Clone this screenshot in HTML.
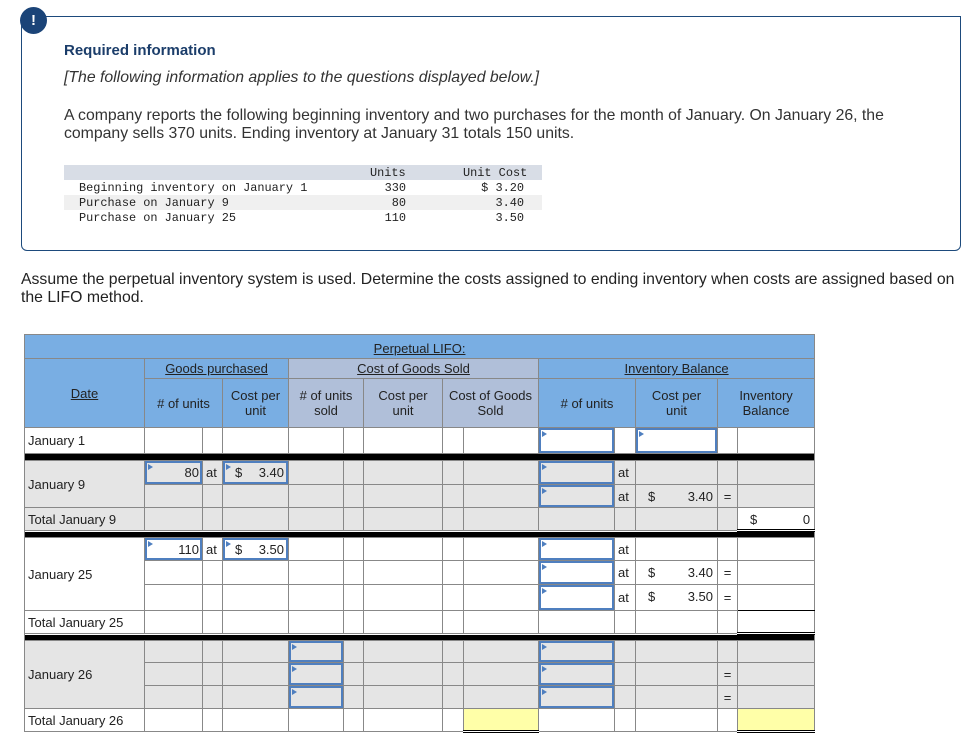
<!DOCTYPE html>
<html><head><meta charset="utf-8"><style>
*{box-sizing:border-box;margin:0;padding:0}
body{width:966px;height:754px;background:#fff;position:relative;font-family:"Liberation Sans",Arial,sans-serif;color:#222;overflow:hidden}
.box{position:absolute;left:21px;top:16px;width:940px;height:235px;border:1px solid #1d4a7c;border-radius:0 0 6px 6px}
.bang{position:absolute;left:20px;top:7px;width:27px;height:27px;border-radius:50%;background:#1b4478;color:#fff;font-weight:bold;font-size:15px;text-align:center;line-height:27px}
.t{position:absolute;white-space:nowrap}
.mono{font-family:"Liberation Mono","DejaVu Sans Mono",monospace;font-size:11.9px;color:#222}
table.g{position:absolute;left:24px;top:334px;border-collapse:collapse;table-layout:fixed;width:790px;font-size:13px}
table.g td{border:1px solid #888;padding:0 3px;overflow:hidden;white-space:nowrap;position:relative}
.hb{background:#79aee3}
.hc{background:#b0bfd9}
.gr td{background:#e5e5e5}
.sep td{background:#000;height:7px;border-color:#000;padding:0}
.u{text-decoration:underline}
.c{text-align:center}
.r{text-align:right}
.in{position:absolute;left:0;top:0;right:0;bottom:0;border:2px solid #4f7fbf}
.in:before{content:"";position:absolute;left:1px;top:1px;border-left:5px solid #4f7fbf;border-top:3px solid transparent;border-bottom:3px solid transparent}
.y{background:#ffffa8 !important}
.bb{border-bottom:3px double #000 !important}
.d{position:absolute;left:12px;top:4px}
.v{position:absolute;right:4px;top:4px}
</style></head><body>
<div class="box"></div>
<div class="bang">!</div>
<div class="t" style="left:64px;top:42px;font-size:15px;font-weight:bold;color:#1b3d6a">Required information</div>
<div class="t" style="left:64px;top:69px;font-size:15.8px;font-style:italic;color:#333">[The following information applies to the questions displayed below.]</div>
<div class="t" style="left:64px;top:107px;font-size:15.8px;line-height:18px;color:#333">A company reports the following beginning inventory and two purchases for the month of January. On January 26, the<br>company sells 370 units. Ending inventory at January 31 totals 150 units.</div>
<div style="position:absolute;left:64px;top:165px;width:478px;height:15px;background:#d8dde6"></div>
<div style="position:absolute;left:64px;top:195px;width:478px;height:15px;background:#f0f0f0"></div>
<div class="t mono" style="left:370px;top:166px">Units</div>
<div class="t mono" style="left:463px;top:166px">Unit Cost</div>
<div class="t mono" style="left:79px;top:181px">Beginning inventory on January 1</div>
<div class="t mono" style="left:79px;top:196px">Purchase on January 9</div>
<div class="t mono" style="left:79px;top:211px">Purchase on January 25</div>
<div class="t mono" style="left:370px;top:181px;width:36px;text-align:right">330</div>
<div class="t mono" style="left:370px;top:196px;width:36px;text-align:right">80</div>
<div class="t mono" style="left:370px;top:211px;width:36px;text-align:right">110</div>
<div class="t mono" style="left:460px;top:181px;width:64px;text-align:right">$ 3.20</div>
<div class="t mono" style="left:460px;top:196px;width:64px;text-align:right">3.40</div>
<div class="t mono" style="left:460px;top:211px;width:64px;text-align:right">3.50</div>
<div class="t" style="left:21px;top:271px;font-size:15.8px;line-height:18px;color:#222">Assume the perpetual inventory system is used. Determine the costs assigned to ending inventory when costs are assigned based on<br>the LIFO method.</div>

<table class="g">
<colgroup><col style="width:120px"><col style="width:58px"><col style="width:20px"><col style="width:66px"><col style="width:55px"><col style="width:20px"><col style="width:79px"><col style="width:21px"><col style="width:75px"><col style="width:76px"><col style="width:21px"><col style="width:82px"><col style="width:20px"><col style="width:77px"></colgroup>
<tr style="height:24px"><td colspan="14" class="hb c"><span class="u" style="position:relative;top:2px">Perpetual LIFO:</span></td></tr>
<tr style="height:20px"><td rowspan="2" class="hb c"><span class="u">Date</span></td><td colspan="3" class="hb c"><span class="u">Goods purchased</span></td><td colspan="5" class="hc c"><span class="u">Cost of Goods Sold</span></td><td colspan="5" class="hb c"><span class="u">Inventory Balance</span></td></tr>
<tr style="height:49px;line-height:15px"><td colspan="2" class="hb c"># of units</td><td class="hb c">Cost per<br>unit</td><td colspan="2" class="hc c"># of units<br>sold</td><td class="hc c">Cost per<br>unit</td><td colspan="2" class="hc c">Cost of Goods<br>Sold</td><td colspan="2" class="hb c"># of units</td><td class="hb c">Cost per<br>unit</td><td colspan="2" class="hb c">Inventory<br>Balance</td></tr>
<tr style="height:26px"><td>January 1</td><td></td><td></td><td></td><td></td><td></td><td></td><td></td><td></td><td><div class="in" style="background:#fff"></div></td><td></td><td><div class="in" style="background:#fff"></div></td><td></td><td></td></tr>
<tr class="sep"><td colspan="14"></td></tr>
<tr class="gr" style="height:24px"><td rowspan="2">January 9</td><td class="r"><div class="in"></div><span style="position:relative">80</span></td><td>at</td><td><div class="in"></div><span class="d">$</span><span class="v">3.40</span></td><td></td><td></td><td></td><td></td><td></td><td><div class="in"></div></td><td>at</td><td></td><td></td><td></td></tr>
<tr class="gr" style="height:23px"><td></td><td></td><td></td><td></td><td></td><td></td><td></td><td></td><td><div class="in"></div></td><td>at</td><td><span class="d">$</span><span class="v">3.40</span></td><td class="c">=</td><td></td></tr>
<tr class="gr" style="height:23px"><td>Total January 9</td><td></td><td></td><td></td><td></td><td></td><td></td><td></td><td></td><td></td><td></td><td></td><td></td><td class="bb" style="background:#fff"><span class="d">$</span><span class="v">0</span></td></tr>
<tr class="sep"><td colspan="14"></td></tr>
<tr style="height:23px"><td rowspan="3">January 25</td><td class="r"><div class="in"></div><span style="position:relative">110</span></td><td>at</td><td><div class="in"></div><span class="d">$</span><span class="v">3.50</span></td><td></td><td></td><td></td><td></td><td></td><td><div class="in"></div></td><td>at</td><td></td><td></td><td></td></tr>
<tr style="height:24px"><td></td><td></td><td></td><td></td><td></td><td></td><td></td><td></td><td><div class="in"></div></td><td>at</td><td><span class="d">$</span><span class="v">3.40</span></td><td class="c">=</td><td></td></tr>
<tr style="height:26px"><td></td><td></td><td></td><td></td><td></td><td></td><td></td><td></td><td><div class="in"></div></td><td>at</td><td><span class="d">$</span><span class="v">3.50</span></td><td class="c">=</td><td style="border-bottom:1px solid #000"></td></tr>
<tr style="height:23px"><td>Total January 25</td><td></td><td></td><td></td><td></td><td></td><td></td><td></td><td></td><td></td><td></td><td></td><td></td><td class="bb"></td></tr>
<tr class="sep"><td colspan="14"></td></tr>
<tr class="gr" style="height:22px"><td rowspan="3">January 26</td><td></td><td></td><td></td><td><div class="in"></div></td><td></td><td></td><td></td><td></td><td><div class="in"></div></td><td></td><td></td><td></td><td></td></tr>
<tr class="gr" style="height:23px"><td></td><td></td><td></td><td><div class="in"></div></td><td></td><td></td><td></td><td></td><td><div class="in"></div></td><td></td><td></td><td class="c">=</td><td></td></tr>
<tr class="gr" style="height:23px"><td></td><td></td><td></td><td><div class="in"></div></td><td></td><td></td><td></td><td></td><td><div class="in"></div></td><td></td><td></td><td class="c">=</td><td></td></tr>
<tr style="height:23px"><td>Total January 26</td><td></td><td></td><td></td><td></td><td></td><td></td><td></td><td class="y bb"></td><td></td><td></td><td></td><td></td><td class="y bb"></td></tr>
</table>
</body></html>
